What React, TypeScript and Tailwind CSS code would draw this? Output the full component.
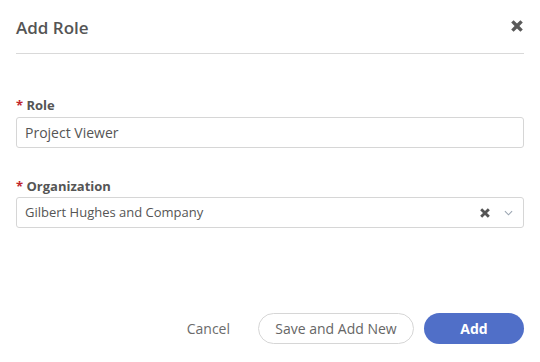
import * as React from 'react'

function CloseGlyph({ className }: { className?: string }) {
  return (
    <svg viewBox="0 0 12 12" className={className} fill="currentColor">
      <path d="M2.6 0.2 L6 3.6 L9.4 0.2 L11.8 2.6 L8.4 6 L11.8 9.4 L9.4 11.8 L6 8.4 L2.6 11.8 L0.2 9.4 L3.6 6 L0.2 2.6 Z" />
    </svg>
  )
}

function Chevron() {
  return (
    <svg viewBox="0 0 10 6" className="h-[6px] w-[9px]" fill="none" stroke="#9aa5b1" strokeWidth="1.2">
      <path d="M1 1 L5 5 L9 1" />
    </svg>
  )
}

function Label({ children }: { children: React.ReactNode }) {
  return (
    <label className="mb-[3px] block text-[13px] font-bold leading-[18px] text-[#555]">
      <span className="text-[#c0262d]">*</span> {children}
    </label>
  )
}

export default function App() {
  return (
    <div
      className="h-[362px] w-[540px] bg-white px-4"
      style={{ fontFamily: '"Open Sans", "Noto Sans", sans-serif' }}
    >
      <div className="flex h-[54px] items-center justify-between border-b border-[#d9d9d9] pt-[2px]">
        <h2 className="text-[17px] font-semibold text-[#555]">Add Role</h2>
        <button className="mb-[4px] mr-[1px] text-[#5a5a5a]">
          <CloseGlyph className="h-[12px] w-[12px]" />
        </button>
      </div>

      <div className="pt-[42px]">
        <Label>Role</Label>
        <input
          defaultValue="Project Viewer"
          className="h-[31px] w-full rounded-[3px] border border-[#d6d6d6] px-[8px] text-[14px] text-[#555] outline-none"
        />
      </div>

      <div className="pt-[29px]">
        <Label>Organization</Label>
        <div className="-mt-[1px] flex h-[31px] w-full items-center rounded-[3px] border border-[#d6d6d6] pl-[8px] pr-[10px]">
          <span className="flex-1 text-[13px] text-[#555]">Gilbert Hughes and Company</span>
          <CloseGlyph className="mr-[14px] h-[10px] w-[10px] text-[#555]" />
          <Chevron />
        </div>
      </div>

      <div className="mt-[85px] flex items-center justify-end gap-[10px]">
        <button className="mr-[18px] text-[14px] text-[#6b6b6b]">Cancel</button>
        <button className="h-[31px] w-[156px] rounded-full border border-[#d6d6d6] bg-white text-[14px] text-[#666]">
          Save and Add New
        </button>
        <button className="h-[31px] w-[100px] rounded-full bg-[#506fc8] text-[14px] font-bold text-white">
          Add
        </button>
      </div>
    </div>
  )
}
